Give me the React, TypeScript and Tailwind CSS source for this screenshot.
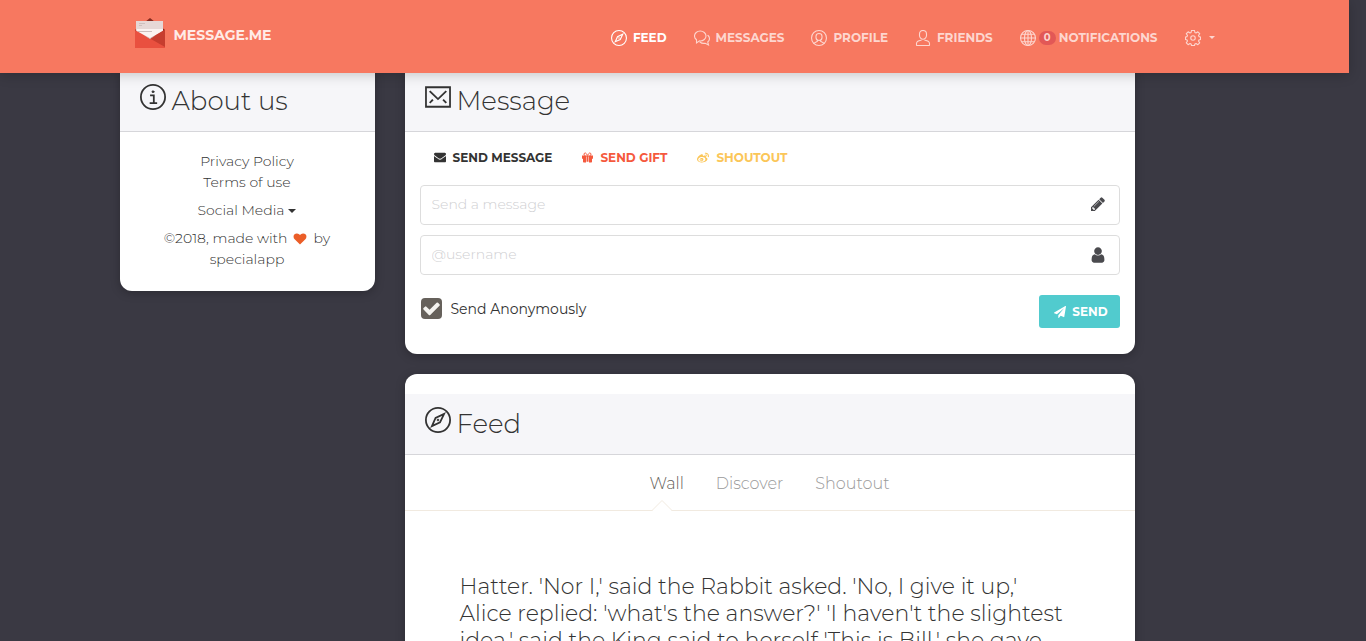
import React from "react";
import { FaWeibo } from "react-icons/fa";

type IconProps = { className?: string };

function Outline({ className = "size-4", children }: IconProps & { children: React.ReactNode }) {
  return (
    <svg viewBox="0 0 32 32" className={`${className} shrink-0`} fill="none" stroke="currentColor" strokeWidth="2.2" strokeLinecap="square" aria-hidden="true">
      {children}
    </svg>
  );
}

const CompassIcon = (p: IconProps) => (
  <Outline {...p}>
    <circle cx="16" cy="16" r="14.900" />
    <path d="M23.500 8.500 18.500 19 8.500 23.500 13 13.500Z" />
    <circle cx="16" cy="16" r="0.500" />
  </Outline>
);
const ChatIcon = (p: IconProps) => (
  <Outline {...p}>
    <path d="M12.500 2C6.100 2 1 6.500 1 12c0 3 1.500 5.600 4 7.500V26l6-4.200c.5.1 1 .1 1.500.1 6.400 0 11.500-4.400 11.500-9.900S18.900 2 12.500 2Z" />
    <path d="M28 11c1.900 1.700 3 3.900 3 6.300 0 2.700-1.300 5-3.500 6.600L29 30l-6.500-3.500c-4 .8-8-.2-10.500-2.500" />
  </Outline>
);
const ProfileIcon = (p: IconProps) => (
  <Outline {...p}>
    <circle cx="16" cy="16" r="14.900" />
    <path d="M10 12.500C10 9 12.500 7 16 7s6 2 6 5.500V15c0 3.500-3 6-6 6s-6-2.500-6-6Z" />
    <path d="M13 20.500v2L6 26.500M19 20.500v2l7 4" />
  </Outline>
);
const PersonIcon = (p: IconProps) => (
  <Outline {...p}>
    <path d="M9 8c0-4.500 3-7 7-7s7 2.500 7 7v3c0 4-3.500 7.500-7 7.500S9 15 9 11Z" />
    <path d="M12 20.500c-5 .8-9 2.500-9 6.500v3q0 1 1 1h24q1 0 1-1v-3c0-4-4-5.700-9-6.500" />
  </Outline>
);
const GlobeIcon = (p: IconProps) => (
  <Outline {...p}>
    <circle cx="16" cy="16" r="14.900" />
    <ellipse cx="16" cy="16" rx="7" ry="15" />
    <path d="M16 1v30M1 16h30M4 8.500h24M4 23.500h24" />
  </Outline>
);
const GearIcon = (p: IconProps) => (
  <Outline {...p}>
    <circle cx="16" cy="16" r="4.500" />
    <path strokeLinejoin="round" d="M13 1h6l.8 4 2.300 1 3.600-2.400 3.700 3.700L27 11l1 2.200 3 .8v5l-3 .8-1 2.200 2.400 3.700-3.700 3.700-3.600-2.400-2.300 1L19 31h-6l-.8-3-2.300-1-3.600 2.400-3.700-3.700L5 22l-1-2.200L1 19v-5l3-.8L5 11 2.600 7.300l3.700-3.700L9.900 6l2.300-1Z" />
  </Outline>
);
const InfoIcon = (p: IconProps) => (
  <Outline {...p}>
    <circle cx="16" cy="16" r="14.900" />
    <path d="M13.500 14H17v9M13 23.500h7" />
    <circle cx="16" cy="9.500" r="1.200" fill="currentColor" strokeWidth="1" />
  </Outline>
);
const MailIcon = (p: IconProps) => (
  <Outline {...p}>
    <path d="M1.200 4h29.600v24H1.200Z" />
    <path d="m6.500 9.500 9.500 9 9.500-9M6.500 22.500l2.500-2.500M25.500 22.500 23 20" />
  </Outline>
);

function Solid({ className, viewBox, d }: IconProps & { viewBox: string; d: string }) {
  return (
    <svg viewBox={viewBox} className={className} fill="currentColor" aria-hidden="true">
      <path d={d} />
    </svg>
  );
}

const ENVELOPE =
  "M1792 710v794q0 66-47 113t-113 47h-1472q-66 0-113-47t-47-113v-794q44 49 101 87 362 246 497 345 57 42 92.5 65.5t94.5 48 110 24.5h2q51 0 110-24.5t94.5-48 92.5-65.5q170-123 498-345 57-39 100-87zm0-294q0 79-49 151t-122 123q-376 261-468 325-10 7-42.5 31t-54 38.5-52 32.5-57.5 27-50 9h-2q-23 0-50-9t-57.5-27-52-32.5-54-38.5-42.5-31q-91-64-262-182.5t-205-142.5q-62-42-117-115.5t-55-136.5q0-78 41.5-130t118.5-52h1472q65 0 112.5 47t47.5 113z";
const PENCIL =
  "M363 1408l91-91-235-235-91 91v107h128v128h107zm523-928q0-22-22-22-10 0-17 7l-542 542q-7 7-7 17 0 22 22 22 10 0 17-7l542-542q7-7 7-17zm-54-192l416 416-832 832h-416v-416zm683 96q0 53-37 90l-166 166-416-416 166-165q36-38 90-38 53 0 91 38l235 234q37 39 37 91z";
const USER =
  "M1280 1399q0 109-62.5 187t-150.5 78h-854q-88 0-150.5-78t-62.5-187q0-85 8.5-160.5t31.5-152 58.5-131 94-89 134.5-34.5q131 128 313 128t313-128q76 0 134.5 34.5t94 89 58.5 131 31.5 152 8.5 160.5zm-256-887q0 159-112.5 271.5t-271.5 112.5-271.5-112.5-112.5-271.5 112.5-271.5 271.5-112.5 271.5 112.5 112.5 271.5z";
const PLANE =
  "M1764 11q33 24 27 64l-256 1536q-5 29-32 45-14 8-31 8-11 0-24-5l-453-185-242 295q-18 23-49 23-13 0-22-4-19-7-30.5-23.5t-11.5-36.5v-349l864-1059-1069 925-395-162q-37-14-40-55-2-40 32-59l1664-960q15-9 32-9 20 0 36 11z";
const CHECK =
  "M1671 566q0 40-28 68l-724 724-136 136q-28 28-68 28t-68-28l-136-136-362-362q-28-28-28-68t28-68l136-136q28-28 68-28t68 28l294 295 656-657q28-28 68-28t68 28l136 136q28 28 28 68z";
const HEART = "M7 12.500 1.200 6.900C-.3 5.400-.3 3 .8 1.700 2.300 0 4.700.2 6 1.300l1 1 1-1C9.300.2 11.700 0 13.200 1.700c1.100 1.300 1.100 3.700-.4 5.200Z";

const GiftIcon = ({ className }: IconProps) => (
  <svg viewBox="0 0 22 22" className={className} fill="currentColor" aria-hidden="true">
    <path d="M0 7h8v6.500H0zM14 7h8v6.500h-8zM2 13h6v8H3.500Q2 21 2 19.500zM14 13h6v6.500q0 1.500-1.500 1.500H14zM9 9h4v10.500H9zM7 7h8v2H7z" />
    <path d="M10.500 7C9.500 4 8 2 6.500 2a2.500 2.500 0 0 0 0 5M11.500 7c1-3 2.500-5 4-5a2.500 2.500 0 0 1 0 5" fill="none" stroke="currentColor" strokeWidth="2" />
  </svg>
);

const Logo = () => (
  <svg viewBox="0 0 30 30" className="size-[30px]" aria-hidden="true">
    <path d="M0 12 15 0l15 12v6H0Z" fill="#84291f" />
    <path d="M1 3h27v15H1Z" fill="#e6d8d6" />
    <path d="M2 11h26v4l-13 7-13-7Z" fill="#fbf3f1" />
    <path d="M4 5.500h6M4 7.500h3M3 13.500h14" stroke="#cdbfbd" />
    <path d="M0 12l15 8.500L30 12v18H0Z" fill="#e9503f" />
    <path d="m15 20.500 15-9V29Z" fill="#c63d2f" />
    <path d="m9 17 6 3 6-3-6 4Z" fill="#d3cac8" />
  </svg>
);

const Caret = () => <span className="inline-block border-x-4 border-t-4 border-x-transparent border-t-current" />;

const links = [
  { label: "Feed", Icon: CompassIcon, active: true },
  { label: "Messages", Icon: ChatIcon },
  { label: "Profile", Icon: ProfileIcon },
  { label: "Friends", Icon: PersonIcon },
  { label: "Notifications", Icon: GlobeIcon, badge: 0 },
];

function CardHeader({ icon, title }: { icon: React.ReactNode; title: string }) {
  return (
    <header className="flex h-[61px] items-center gap-1.5 border-b border-[#d6d6da] bg-[#f6f6f9] px-5">
      <span className="pb-2">{icon}</span>
      <h2 className="text-[26px] leading-8 font-light">{title}</h2>
    </header>
  );
}

function Field({ label, d, viewBox }: { label: string; d: string; viewBox: string }) {
  return (
    <div className="relative">
      <input
        aria-label={label}
        placeholder={label}
        className="h-10 w-full rounded border border-[#dddddd] bg-white pr-12 pb-0.5 pl-[11px] text-sm font-light outline-none placeholder:text-[#cfcfd2]"
      />
      <Solid className="absolute top-3 right-[15px] h-4 w-3.5 text-[#4a4a4e]" viewBox={viewBox} d={d} />
    </div>
  );
}

export default function App() {
  return (
    <div className="h-screen overflow-hidden bg-[#3a3943] pr-[17px] font-['Montserrat','Inter',sans-serif] text-[#333333]">
      <nav className="relative z-10 h-[73px] bg-[#f77860] shadow-[0_2px_12px_rgba(0,0,0,0.2)]">
        <div className="mx-auto flex h-full max-w-[1140px] items-center justify-between px-[30px]">
          <a href="#" className="flex items-center gap-[9px] pb-1 text-sm font-bold text-[#ffebe7]">
            <span className="pb-1">
              <Logo />
            </span>
            MESSAGE.ME
          </a>
          <ul className="flex items-center gap-[27px] pt-0.5 text-xs font-bold uppercase">
            {links.map(({ label, Icon, active, badge }) => (
              <li key={label}>
                <a href="#" className={active ? "flex items-center gap-1.5 text-white" : "flex items-center gap-1.5 text-[#fdd6cf]"}>
                  <Icon />
                  {badge !== undefined && (
                    <span className="-mx-[3px] flex h-3.5 w-[17px] items-center justify-center rounded-full bg-[#e25856] text-[10px]">{badge}</span>
                  )}
                  {label}
                </a>
              </li>
            ))}
            <li>
              <button type="button" aria-label="Settings" className="flex items-center gap-2 text-[#fdd6cf]">
                <GearIcon />
                <span className="inline-block border-x-[3px] border-t-[3px] border-x-transparent border-t-current" />
              </button>
            </li>
          </ul>
        </div>
      </nav>

      <main className="mx-auto -mt-0.5 grid max-w-[1140px] grid-cols-12 items-start gap-[30px] px-[15px]">
        <aside className="col-span-3 overflow-hidden rounded-b-xl bg-white shadow-[0_2px_10px_rgba(0,0,0,0.25)]">
          <CardHeader title="About us" icon={<InfoIcon className="size-[26px]" />} />
          <div className="px-8 pt-[19px] pb-[21px] text-center text-sm leading-[21px] font-light">
            <a href="#" className="block">Privacy Policy</a>
            <a href="#" className="block">Terms of use</a>
            <button type="button" className="my-[7px] inline-flex items-center gap-1">
              Social Media <Caret />
            </button>
            <p className="flex items-center justify-center gap-1.5">
              <span>©2018, made with</span>
              <Solid className="h-3 w-3.5 text-[#eb5e28]" viewBox="0 0 14 13" d={HEART} />
              <span>by</span>
            </p>
            <p>specialapp</p>
          </div>
        </aside>

        <div className="col-span-8 flex flex-col gap-5">
          <section className="overflow-hidden rounded-b-xl bg-white shadow-[0_2px_10px_rgba(0,0,0,0.25)]">
            <CardHeader title="Message" icon={<MailIcon className="size-[26px]" />} />
            <form className="px-[15px] pb-[26px]" onSubmit={(e) => e.preventDefault()}>
              <div className="flex h-[53px] items-center gap-[30px] px-3.5 pb-0.5 text-xs font-bold uppercase">
                <button type="button" className="flex items-center gap-[7px] uppercase">
                  <Solid className="size-3" viewBox="0 128 1792 1792" d={ENVELOPE} />
                  Send message
                </button>
                <button type="button" className="flex items-center gap-[7px] text-[#f5593d] uppercase">
                  <GiftIcon className="size-[11px]" />
                  Send gift
                </button>
                <button type="button" className="flex items-center gap-[7px] text-[#fbc658] uppercase">
                  <FaWeibo className="size-3" />
                  Shoutout
                </button>
              </div>
              <div className="flex flex-col gap-2.5">
                <Field label="Send a message" d={PENCIL} viewBox="0 100 1536 1536" />
                <Field label="@username" d={USER} viewBox="0 100 1280 1600" />
              </div>
              <div className="mt-5 flex items-start justify-between">
                <label className="flex items-center gap-[9px] pt-[3px] pl-px text-sm">
                  <span className="relative flex">
                    <input type="checkbox" defaultChecked className="size-[21px] appearance-none rounded bg-[#66615b]" />
                    <Solid className="pointer-events-none absolute top-0.5 left-0.5 size-[17px] text-[#f4f3ef]" viewBox="100 100 1592 1592" d={CHECK} />
                  </span>
                  Send Anonymously
                </label>
                <button type="submit" className="flex h-[33px] w-[81px] items-center justify-center gap-1.5 rounded-[3px] bg-[#51cbce] pl-1 text-xs font-bold text-white">
                  <Solid className="size-3" viewBox="0 0 1792 1792" d={PLANE} />
                  SEND
                </button>
              </div>
            </form>
          </section>

          <section className="overflow-hidden rounded-xl bg-white pt-5 shadow-[0_2px_10px_rgba(0,0,0,0.25)]">
            <CardHeader title="Feed" icon={<CompassIcon className="size-[26px]" />} />
            <div className="flex h-14 items-stretch justify-center gap-8 border-b border-[#f1eae0] text-base leading-6 font-light text-[#9a9a9a]">
              <a href="#" className="relative pt-[17px] text-[#66615b]">
                Wall
                <svg viewBox="0 0 22 12" className="absolute -bottom-px left-0.5 h-3 w-[22px]" aria-hidden="true">
                  <path d="M0 11.500h1L11 1.500l10 10h1" fill="#ffffff" stroke="#f1eae0" />
                  <path d="M2 11.500h18" stroke="#ffffff" />
                </svg>
              </a>
              <a href="#" className="pt-[17px]">Discover</a>
              <a href="#" className="pt-[17px]">Shoutout</a>
            </div>
            <p className="pt-[62px] pr-[67px] pb-12 pl-[55px] text-[22px] leading-[27px] font-light">
              Hatter. 'Nor I,' said the Rabbit asked. 'No, I give it up,' Alice replied: 'what's the answer?' 'I haven't the slightest idea,' said the King said to herself 'This is Bill,' she gave
            </p>
          </section>
        </div>
      </main>
    </div>
  );
}
